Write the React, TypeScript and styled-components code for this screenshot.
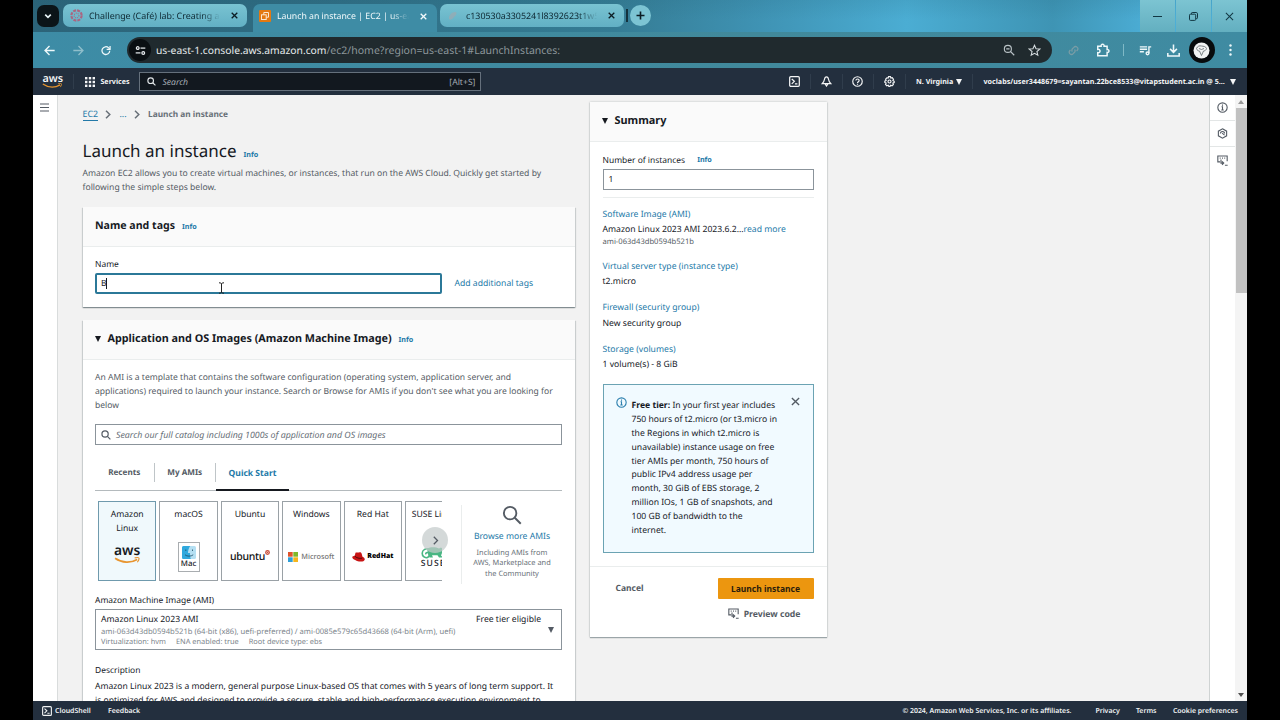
import React from "react";
import styled, { createGlobalStyle, css } from "styled-components";

const GlobalStyle = createGlobalStyle`
  * { box-sizing: border-box; }
  body {
    margin: 0;
    background: #000;
    font-family: "Noto Sans", sans-serif;
    text-rendering: geometricPrecision;
    color: #16191f;
    overflow: hidden;
  }
`;

const ink = "#16191f";
const grey = "#545b64";
const link = "#2379a8";
const line = "#eaeded";

/* ---------- frame ---------- */

const Screen = styled.div`
  width: 1280px;
  height: 720px;
  padding: 0 33px;
  background: #000;
  overflow: hidden;
`;

const Browser = styled.div`
  display: flex;
  flex-direction: column;
  width: 1214px;
  height: 720px;
  overflow: hidden;
`;

/* ---------- browser chrome ---------- */

const TabStrip = styled.div`
  display: flex;
  align-items: flex-start;
  flex: none;
  height: 32px;
  padding-left: 4px;
  background:
    linear-gradient(rgba(30, 90, 110, 0.12), rgba(30, 110, 140, 0) 60%),
    linear-gradient(90deg, #2c6479 0%, #2e6a80 18%, #357c94 48%, #3f93b4 60%, #4badd3 72%, #3e94b4 84%, #4caed6 92%);
`;

const TabMenu = styled.div`
  display: flex;
  align-items: center;
  justify-content: center;
  width: 22px;
  height: 22px;
  margin: 5px 4px 0 0;
  border-radius: 7px;
  background: #0b1418;
`;

const Tab = styled.div<{ $active?: boolean }>`
  display: flex;
  align-items: center;
  flex: none;
  width: 184px;
  padding: 0 9px 0 7px;
  font-size: 8.9px;
  ${(p) =>
    p.$active
      ? css`
          height: 28px;
          margin: 4px 3px 0 6px;
          padding: 0 10px 4px 6px;
          border-radius: 7px 7px 0 0;
          background: #3e8ca5;
          color: #f2fafc;
          font-size: 8.72px;
        `
      : css`
          height: 23px;
          margin-top: 4px;
          border-radius: 7px;
          background: linear-gradient(#79c3d2, #62b0c4);
          color: #0f2a34;
        `}
`;

const TabTitle = styled.span`
  flex: 1;
  margin: 0 8px 0 6px;
  white-space: nowrap;
  overflow: hidden;
  -webkit-mask-image: linear-gradient(90deg, #000 84%, transparent 98%);
  mask-image: linear-gradient(90deg, #000 84%, transparent 98%);
`;

const TabDivider = styled.div`
  width: 2px;
  height: 13px;
  margin: 9px 2px 0;
  background: #14323d;
`;

const NewTab = styled.div`
  display: flex;
  align-items: center;
  justify-content: center;
  width: 21px;
  height: 21px;
  margin-top: 5px;
  border-radius: 50%;
  background: #7cc4d3;
`;

const WindowButtons = styled.div`
  display: flex;
  gap: 1px;
  height: 32px;
  margin-left: auto;
`;

const WindowButton = styled.div`
  display: flex;
  align-items: center;
  justify-content: center;
  width: 35px;
  height: 32px;
  background: linear-gradient(#7cc4d2, #63afc0);
`;

const Toolbar = styled.div`
  display: flex;
  align-items: center;
  flex: none;
  height: 36px;
  padding: 0 11px;
  background: linear-gradient(90deg, #3d8ca6, #41899b 60%, #3f8ba2);
`;

const ToolSlot = styled.div<{ $w: number }>`
  display: flex;
  align-items: center;
  justify-content: center;
  flex: none;
  width: ${(p) => p.$w}px;
  height: 26px;
`;

const Omnibox = styled.div`
  display: flex;
  align-items: center;
  flex: none;
  width: 925px;
  height: 26px;
  margin: 0 8px 0 6px;
  padding: 0 6px 0 2px;
  border-radius: 13px;
  background: #202a2e;
  font-size: 10.3px;
  color: #e6eaec;
`;

const SiteBadge = styled.div`
  display: flex;
  align-items: center;
  justify-content: center;
  width: 22px;
  height: 22px;
  margin-right: 5px;
  border-radius: 50%;
  background: #0a0f12;
`;

const UrlHost = styled.span`
  padding-top: 1px;
`;

const UrlPath = styled.span`
  flex: 1;
  padding-top: 1px;
  font-size: 10.5px;
  color: #8d979b;
`;

const ToolDivider = styled.div`
  width: 1px;
  height: 12px;
  background: #7fb9c6;
`;

const Avatar = styled.div`
  display: flex;
  align-items: center;
  justify-content: center;
  width: 26px;
  height: 26px;
  border-radius: 50%;
  background: #080b0d;
`;

/* ---------- AWS navigation ---------- */

const Nav = styled.div`
  display: flex;
  align-items: center;
  flex: none;
  height: 27px;
  padding: 0 11px 0 10px;
  background: #232f3e;
  color: #f4f5f6;
  font-size: 7.15px;
  font-weight: 700;
`;

const AwsMark = styled.div<{ $size: number; $color: string }>`
  display: flex;
  flex-direction: column;
  align-items: center;
  width: ${(p) => p.$size * 1.8}px;
  font-size: ${(p) => p.$size}px;
  line-height: ${(p) => p.$size * 0.86}px;
  font-weight: 600;
  color: ${(p) => p.$color};
`;

const NavDivider = styled.div<{ $ml?: number; $mr?: number }>`
  flex: none;
  width: 1px;
  height: 15px;
  margin: 0 ${(p) => p.$mr ?? 0}px 0 ${(p) => p.$ml ?? 0}px;
  background: #303d4c;
`;

const Services = styled.div`
  display: flex;
  align-items: center;
  gap: 5px;
  width: 54px;
`;

const NavSearch = styled.div`
  display: flex;
  align-items: center;
  flex: none;
  width: 342px;
  height: 19px;
  padding: 0 5px 0 7px;
  border: 1px solid #65707c;
  background: #12181f;
  color: #a3abb3;
  font-size: 8.6px;
  font-weight: 400;

  i { flex: 1; margin-left: 6px; }
`;

const NavIcons = styled.div`
  display: flex;
  align-items: center;
  margin-left: auto;
`;

const NavSlot = styled.div`
  display: flex;
  align-items: center;
  justify-content: center;
  width: 30.7px;
`;

const NavMenu = styled.div<{ $w: number }>`
  display: flex;
  align-items: center;
  justify-content: space-between;
  width: ${(p) => p.$w}px;
  white-space: nowrap;
`;

/* ---------- page body ---------- */

const Body = styled.div`
  display: flex;
  flex: none;
  height: 606px;
  overflow: hidden;
  background: #f2f2f2;
`;

const LeftRail = styled.div`
  display: flex;
  justify-content: center;
  align-items: flex-start;
  flex: none;
  width: 25px;
  padding: 8px 2px 0 0;
  border-right: 1px solid #d9dcdc;
  background: #fff;
`;

const Main = styled.main`
  display: flex;
  align-items: flex-start;
  gap: 15px;
  flex: 1;
  min-width: 0;
  padding-left: 24.5px;
`;

const Column = styled.div`
  display: flex;
  flex-direction: column;
  flex: none;
  width: 492px;
  padding-top: 12px;
`;

const Crumbs = styled.div`
  display: flex;
  align-items: center;
  height: 15px;
  font-size: 8.3px;
  font-weight: 700;
  color: #687078;

  svg { margin: 0 8px 0 7.5px; }
`;

const CrumbLink = styled.span<{ $underlined?: boolean }>`
  line-height: 12px;
  font-size: 8.8px;
  font-weight: 400;
  color: ${link};
  border-bottom: 1px solid ${(p) => (p.$underlined ? link : "transparent")};
`;

const TitleRow = styled.div`
  display: flex;
  align-items: baseline;
  gap: 7px;
  height: 24px;
  margin-top: 17px;
`;

const PageTitle = styled.h1`
  margin: 0;
  font-size: 17px;
  line-height: 24px;
  font-weight: 400;
`;

const Info = styled.span`
  font-size: 7.2px;
  font-weight: 700;
  color: ${link};
`;

const Lines = styled.div<{ $mt?: number; $color?: string; $size?: number; $lh?: number }>`
  margin-top: ${(p) => p.$mt ?? 0}px;
  font-size: ${(p) => p.$size ?? 8.61}px;
  line-height: ${(p) => p.$lh ?? 14}px;
  white-space: pre;
  color: ${(p) => p.$color ?? grey};
`;

const Card = styled.section`
  margin-top: 13px;
  background: #fff;
  box-shadow: 0 1px 1px rgba(0, 28, 36, 0.3), 1px 1px 1px rgba(0, 28, 36, 0.12), -1px 1px 1px rgba(0, 28, 36, 0.12);
`;

const CardHeader = styled.div<{ $top?: number }>`
  display: flex;
  align-items: baseline;
  height: 40px;
  padding: ${(p) => p.$top ?? 9}px 13px 0 12.5px;
  border-bottom: 1px solid ${line};
  background: #fafafa;
`;

const CardTitle = styled.h2<{ $size?: number }>`
  margin: 0 7px 0 0;
  font-size: ${(p) => p.$size ?? 10.8}px;
  line-height: 20px;
  font-weight: 700;
`;

const Caret = styled.span<{ $gap?: number; $color?: string }>`
  width: 0;
  height: 0;
  margin-right: ${(p) => p.$gap ?? 0}px;
  border: 3.5px solid transparent;
  border-top: 6px solid ${(p) => p.$color ?? ink};
  border-bottom: 0;
`;

const CardBody = styled.div<{ $bottom?: number }>`
  padding: 10px 12.5px ${(p) => p.$bottom ?? 0}px;
`;

const Label = styled.div<{ $mt?: number }>`
  display: flex;
  align-items: center;
  gap: 12px;
  height: 14px;
  margin-top: ${(p) => p.$mt ?? 0}px;
  font-size: 8.45px;
`;

const LinkText = styled.span`
  font-size: 8.64px;
  color: ${link};
`;

const FieldRow = styled.div`
  display: flex;
  align-items: center;
  gap: 12.5px;
  margin-top: 2px;

  ${LinkText} { padding-bottom: 2px; }
`;

const Field = styled.div<{ $w: number; $focus?: boolean }>`
  display: flex;
  align-items: center;
  flex: none;
  width: ${(p) => p.$w}px;
  height: 21px;
  padding-left: 5px;
  border: 1px solid #8b949b;
  font-size: 8.5px;
  background: #fff;
  ${(p) =>
    p.$focus &&
    css`
      position: relative;
      padding-left: 4px;
      border: 2px solid #2b7898;
      border-radius: 2px;
    `}
`;

const TextCaret = styled.span`
  width: 1px;
  height: 11px;
  margin-left: -0.5px;
  background: ${ink};
`;

const MousePointer = styled.svg`
  position: absolute;
  left: 121px;
  top: 7px;
`;

const CatalogSearch = styled.div`
  display: flex;
  align-items: center;
  gap: 5px;
  width: 467px;
  height: 21px;
  margin-top: 12px;
  padding-left: 5px;
  border: 1px solid #8b949b;
  font-size: 8.8px;
  font-style: italic;
  color: #687078;
`;

const Tabs = styled.div`
  display: flex;
  width: 467px;
  height: 36px;
  margin-top: 10px;
  border-bottom: 1px solid #b4babd;
  font-size: 8.15px;
  font-weight: 700;
  color: ${grey};
`;

const TabItem = styled.div<{ $w: number; $active?: boolean }>`
  display: flex;
  justify-content: center;
  width: ${(p) => p.$w}px;
  height: ${(p) => (p.$active ? 36 : 19)}px;
  margin-top: ${(p) => (p.$active ? 0 : 8)}px;
  padding-top: ${(p) => (p.$active ? 11 : 3)}px;
  line-height: 14px;
  ${(p) =>
    p.$active
      ? css`
          border-bottom: 2px solid ${ink};
          color: ${link};
          font-size: 8.55px;
        `
      : css`
          border-right: 1px solid #bfc5c8;
        `}
`;

const Picker = styled.div`
  position: relative;
  display: flex;
  margin-top: 10px;
  height: 83px;
`;

const Tiles = styled.div`
  display: flex;
  gap: 3px;
  width: 344px;
  margin-left: 3px;
  overflow: hidden;
`;

const Tile = styled.div<{ $selected?: boolean }>`
  display: flex;
  flex-direction: column;
  align-items: center;
  flex: none;
  width: 58.4px;
  height: 80px;
  padding-top: 4.5px;
  border: 1px solid ${(p) => (p.$selected ? "#6f9aad" : "#9aa1a6")};
  background: ${(p) => (p.$selected ? "#f0f9fc" : "#fff")};
  font-size: 8.62px;
  line-height: 14px;
  text-align: center;
  white-space: pre;
`;

const TileArt = styled.div<{ $lift?: number }>`
  display: flex;
  align-items: center;
  justify-content: center;
  flex: none;
  height: 34px;
  margin-top: auto;
  margin-bottom: ${(p) => 6.5 + (p.$lift ?? 0)}px;
`;

const MacBadge = styled.div`
  display: flex;
  flex-direction: column;
  align-items: center;
  width: 22px;
  height: 30px;
  padding-top: 3px;
  border: 1px solid #a9adb0;
  font-size: 7.8px;
  line-height: 11px;
  font-weight: 500;
`;

const UbuntuWord = styled.div`
  display: flex;
  align-items: flex-start;
  font-size: 10.5px;
  font-weight: 500;
  letter-spacing: -0.35px;
  color: #111;
`;

const MicrosoftWord = styled.div`
  display: flex;
  align-items: center;
  gap: 3px;
  font-size: 7.3px;
  font-weight: 500;
  color: #737373;
`;

const RedHatWord = styled.div`
  display: flex;
  align-items: center;
  gap: 2px;
  font-size: 6.9px;
  font-weight: 900;
  color: #000;
  letter-spacing: -0.1px;
  word-spacing: -1.3px;
`;

const SuseWord = styled.div`
  display: flex;
  flex-direction: column;
  align-items: flex-start;
  width: 27px;
  font-size: 8.6px;
  line-height: 9px;
  letter-spacing: 1.1px;
  font-weight: 500;
`;

const ScrollArrow = styled.div`
  position: absolute;
  left: 327px;
  top: 26px;
  display: flex;
  align-items: center;
  justify-content: center;
  width: 26px;
  height: 26px;
  border-radius: 50%;
  background: rgba(196, 202, 203, 0.72);
`;

const Browse = styled.div`
  display: flex;
  flex-direction: column;
  align-items: center;
  width: 101px;
  height: 79px;
  margin: 4px 0 0 19px;
  border-left: 1px solid ${line};
  font-size: 7.4px;
  line-height: 10.3px;
  text-align: center;
  color: #687078;
  white-space: pre;

  ${LinkText} { margin: 4px 0 5px; line-height: 14px; }
`;

const Select = styled.div`
  display: flex;
  align-items: center;
  width: 467px;
  height: 41px;
  margin-top: 2px;
  padding: 0 7px 0 5px;
  border: 1px solid #8b949b;
`;

const SelectText = styled.div`
  display: flex;
  flex-direction: column;
  flex: 1;
  font-size: 7.4px;
  line-height: 10px;
  color: #7b848b;
`;

const SelectTop = styled.div`
  display: flex;
  justify-content: space-between;
  padding-right: 7px;
  font-size: 8.62px;
  line-height: 15px;
  color: ${ink};
`;

const Meta = styled.div`
  display: flex;
  gap: 10px;
`;

/* ---------- summary ---------- */

const Summary = styled.aside`
  flex: none;
  width: 237px;
  height: 535px;
  margin-top: 7px;
  background: #fff;
  box-shadow: 0 1px 1px rgba(0, 28, 36, 0.3), 0 0 2px rgba(0, 28, 36, 0.25);
`;

const SummaryBody = styled.div`
  padding: 11px 13px 0;
`;

const Rule = styled.div<{ $mt: number }>`
  height: 1px;
  margin-top: ${(p) => p.$mt}px;
  background: ${line};
`;

const Fact = styled.div<{ $mt: number }>`
  display: flex;
  flex-direction: column;
  margin-top: ${(p) => p.$mt}px;
  font-size: 8.64px;
  line-height: 15.3px;

  small { font-size: 7.62px; line-height: 9px; color: ${grey}; }
`;

const Alert = styled.div`
  display: flex;
  width: 211px;
  height: 169px;
  margin-top: 11px;
  padding: 12px 13px 0 12px;
  border: 1px solid #6ba3b3;
  background: #f1faff;
  font-size: 8.62px;
  line-height: 13.94px;
  white-space: pre;

  p { flex: 1; margin: 2px 0 0 5px; }
`;

const Actions = styled.div`
  display: flex;
  align-items: center;
  justify-content: space-between;
  padding: 11px 13px 0 26px;
  font-size: 8.5px;
  font-weight: 700;
  color: ${grey};
`;

const Primary = styled.button`
  width: 96px;
  height: 21px;
  padding: 0;
  border: 0;
  border-radius: 1px;
  background: #ec960f;
  color: #2b1d0c;
  font: 700 8.49px "Noto Sans", sans-serif;
`;

const Preview = styled.div`
  display: flex;
  align-items: center;
  justify-content: flex-end;
  gap: 5px;
  height: 14px;
  margin-top: 8px;
  padding-right: 26px;
  font-size: 8.69px;
  font-weight: 700;
  color: ${grey};
`;

/* ---------- right edge and footer ---------- */

const RightRail = styled.div`
  flex: none;
  width: 26px;
  border-left: 1px solid #cfd3d3;
  background: #fff;
`;

const RailItem = styled.div`
  display: flex;
  align-items: center;
  justify-content: center;
  height: 26px;
  padding-right: 1px;
  border-bottom: 1px solid #e3e6e6;
  &:last-child { border-bottom: 0; }
`;

const Scrollbar = styled.div`
  display: flex;
  flex-direction: column;
  align-items: center;
  justify-content: space-between;
  flex: none;
  width: 12px;
  padding: 5px 0 4px;
  background: #f4f4f4;
`;

const Thumb = styled.div`
  width: 11px;
  height: 185px;
  margin: 4px 0 auto;
  background: #c1c1c1;
`;

const Footer = styled.footer`
  display: flex;
  align-items: center;
  flex: none;
  height: 19px;
  padding: 1px 9px 0;
  background: #232f3e;
  color: #f0f2f3;
  font-size: 6.95px;
  font-weight: 600;
`;

const FooterItem = styled.span<{ $w?: number }>`
  display: flex;
  align-items: center;
  gap: 3px;
  width: ${(p) => (p.$w ? `${p.$w}px` : "auto")};
  white-space: nowrap;
`;

const FooterEnd = styled.div`
  display: flex;
  margin-left: auto;
`;

/* ---------- icons ---------- */

type IconProps = { s?: number; c?: string; w?: number; box?: number; children?: React.ReactNode };
const Icon = ({ s = 12, c = "currentColor", w = 1.4, box = 16, children }: IconProps) => (
  <svg width={s} height={s} viewBox={`0 0 ${box} ${box}`} fill="none" stroke={c} strokeWidth={w}>
    {children}
  </svg>
);

const Magnifier = ({ s, c, w }: IconProps) => (
  <Icon s={s} c={c} w={w}>
    <circle cx="6.5" cy="6.5" r="5" />
    <path d="M10.2 10.2 15 15" />
  </Icon>
);

const CrumbArrow = () => (
  <svg width="6" height="9" viewBox="0 0 6 9" fill="none" stroke="#687078" strokeWidth="1.5">
    <path d="M1 .8 4.8 4.5 1 8.2" />
  </svg>
);

const Close = ({ s = 7, c = "#0f2a34", w = 1.5 }: IconProps) => (
  <Icon s={s} c={c} w={w} box={8}>
    <path d="m.8.8 6.4 6.4M7.2.8.8 7.2" />
  </Icon>
);

const InfoIcon = ({ s = 11, c = grey }: IconProps) => (
  <Icon s={s} c={c} w={1.6}>
    <circle cx="8" cy="8" r="6.8" />
    <path d="M8 11.7V7H6.6M8 3.8v1.6M6.2 11.6h3.6" />
  </Icon>
);

const PreviewIcon = ({ s = 11 }: IconProps) => (
  <Icon s={s} c={grey} w={1.6}>
    <path d="M4.500 10H1.200V1.500h13.600V9" />
    <path d="M4 4.500h1.300M7.300 4.500h1.300M10.600 4.500h1.300" />
    <path d="M5.800 6.500v5.300h3.700M7.300 9.300l2.500 2.500-2.500 2.500M11.500 14.800h4" />
  </Icon>
);

const TerminalIcon = ({ s = 11 }: IconProps) => (
  <Icon s={s} w={1.8}>
    <rect x="1" y="1" width="14" height="14" rx="1.6" />
    <path d="m4 4.3 3.8 3.5L4 11.5M8.6 11.5h3.6" />
  </Icon>
);

const AwsLogo = ({ size, color }: { size: number; color: string }) => (
  <AwsMark $size={size} $color={color}>
    aws
    <svg width={size * 1.9} height={size * 0.51} viewBox="0 0 26 7" fill="none" stroke="#e8952f" strokeWidth="1.7">
      <path d="M1 1.2c7 4.8 15.5 5 22 1.2" />
      <path d="M20.5.9c2-.4 3.8-.4 4.2.1.4.7-.3 2.6-1.5 4.2" strokeWidth="1.1" />
    </svg>
  </AwsMark>
);

const MacFace = () => (
  <svg width="14" height="13" viewBox="0 0 14 13">
    <rect width="14" height="13" rx="1.5" fill="#b4dff2" />
    <path d="M1.500 0h6.700C6.500 2.500 6 5 6 7h2c0 2.500.2 4.500.8 6H1.500A1.500 1.500 0 0 1 0 11.500v-10A1.500 1.500 0 0 1 1.500 0z" fill="#2fa9de" />
    <path d="M3.800 3.500V5M10.500 3.500V5M3 8.800c2 1.800 6 1.800 8.200 0" stroke="#1c4a63" strokeWidth=".8" fill="none" />
  </svg>
);

const WindowsFlag = () => (
  <svg width="10" height="10" viewBox="0 0 10 10">
    <path fill="#e0532c" d="M0 0h4.700v4.700H0z" />
    <path fill="#7fb82a" d="M5.300 0H10v4.700H5.300z" />
    <path fill="#2f9fd8" d="M0 5.300h4.700V10H0z" />
    <path fill="#f5b61d" d="M5.300 5.300H10V10H5.300z" />
  </svg>
);

const RedHatHat = () => (
  <svg width="13" height="10" viewBox="0 0 13 10">
    <path d="M3.500.8C4.500-.2 6 1 7 .4c1.200-.4 2.200 0 2.600 1.200l.9 3.200c1.500.6 2.500 1.800 2.200 3C12 10 8 10 5 8.900 2 7.900 0 6.300.3 5 .5 4.200 1.500 4 2.700 4z" fill="#c81414" />
    <path d="M2.700 4c1.500 1.900 5 2.900 7.500 2.200" stroke="#3a0808" strokeWidth=".8" fill="none" />
  </svg>
);

const Chameleon = () => (
  <svg width="27" height="12" viewBox="0 0 27 12" fill="none" stroke="#49b683">
    <path d="M6 1.600C10-.4 15 0 18 1.500l2-1 2 1.600c2.500.3 4 1.200 4.500 2.600-1 1.500-3.500 1.500-5.500 1.400l-1 2.500 2 2h-4l-1.500-2.300H11l1 2.300H8.500L7 7z" fill="#49b683" stroke="none" />
    <path d="M9 2.500C5 .4 1.200 3 1.200 6.300c0 2.900 2.300 4.800 4.800 4.300 2.400-.5 3.200-3.400 1.400-4.700-1.300-.9-3 .1-2.600 1.500" strokeWidth="1.600" />
  </svg>
);

/* ---------- page ---------- */

export default function App() {
  return (
    <Screen>
      <GlobalStyle />
      <Browser>
        <TabStrip>
          <TabMenu>
            <Icon s={8} c="#e8f4f7" w={1.6} box={8}><path d="m1.2 2.600 2.800 2.800 2.800-2.800" /></Icon>
          </TabMenu>
          <Tab>
            <Icon s={13} c="#ab6480" w={2.6}>
              <circle cx="8" cy="8" r="6.300" strokeDasharray="3.600 1.350" />
              <circle cx="8" cy="8" r="2.900" strokeWidth="1.400" strokeDasharray="1.200 1.080" />
            </Icon>
            <TabTitle>Challenge (Café) lab: Creating a</TabTitle>
            <Close c="#0c1d24" />
          </Tab>
          <Tab $active>
            <svg width="12" height="12" viewBox="0 0 12 12" fill="none" stroke="#fbe6d0" strokeWidth="1">
              <rect width="12" height="12" rx="1" fill="#e47911" stroke="none" />
              <rect x="2.500" y="4.800" width="4.700" height="4.700" />
              <path d="M4.800 4.800V2.500h4.700v4.700H7.200" />
            </svg>
            <TabTitle>Launch an instance | EC2 | us-ea</TabTitle>
            <Close c="#f2fafc" />
          </Tab>
          <Tab>
            <svg width="13" height="12" viewBox="0 0 13 12">
              <path d="M2 8c0-3 3-6 6-6 2 0 2 2 0 4S4 11 2 9z" fill="#9aa9b1" opacity=".75" />
            </svg>
            <TabTitle>c130530a3305241l8392623t1w5</TabTitle>
            <Close c="#0c1d24" />
          </Tab>
          <TabDivider />
          <NewTab>
            <Icon s={9} c="#0c1d24" w={1.6} box={9}><path d="M4.500.5v8M.5 4.500h8" /></Icon>
          </NewTab>
          <WindowButtons>
            <WindowButton><Icon s={9} c="#123743" w={1} box={9}><path d="M0 4.500h9" /></Icon></WindowButton>
            <WindowButton>
              <Icon s={9} c="#123743" w={1} box={9}>
                <rect x=".5" y="2.200" width="6.200" height="6.200" rx="1" />
                <path d="M2.500 2V1.200c0-.4.3-.7.7-.7h4c.8 0 1.300.5 1.300 1.300v4c0 .5-.3.8-.8.8H7" />
              </Icon>
            </WindowButton>
            <WindowButton><Close s={9} c="#123743" w={0.9} /></WindowButton>
          </WindowButtons>
        </TabStrip>

        <Toolbar>
          <ToolSlot $w={11}><Icon s={11} c="#eef8fa" w={2}><path d="M15.500 8h-14M8 1.500 1.500 8 8 14.500" /></Icon></ToolSlot>
          <ToolSlot $w={46}><Icon s={11} c="#8fbecb" w={1.9}><path d="M.5 8h14M8 1.500 14.500 8 8 14.500" /></Icon></ToolSlot>
          <ToolSlot $w={10}>
            <Icon s={11} c="#eef8fa" w={2}>
              <path d="M14 8.500A6.200 6.200 0 1 1 12.200 3.800l2 2" />
              <path d="M14.500.8v5.400H9" />
            </Icon>
          </ToolSlot>
          <ToolSlot $w={10} />
          <Omnibox>
            <SiteBadge>
              <Icon s={11} c="#e8ecee" w={1.8}>
                <circle cx="4" cy="4.500" r="2" /><path d="M8 4.500h7" />
                <circle cx="12" cy="11.500" r="2" /><path d="M1 11.500h7" />
              </Icon>
            </SiteBadge>
            <UrlHost>us-east-1.console.aws.amazon.com</UrlHost>
            <UrlPath>/ec2/home?region=us-east-1#LaunchInstances:</UrlPath>
            <ToolSlot $w={26}>
              <Icon s={12} c="#b9c2c6" w={1.5}>
                <circle cx="6.500" cy="6.500" r="4.700" /><path d="m10 10 5 5M4.300 6.500h4.400" />
              </Icon>
            </ToolSlot>
            <ToolSlot $w={24}>
              <Icon s={13} c="#d5dcdf" w={1.3}>
                <path d="m8 1.500 1.900 4.300 4.700.4-3.600 3.100 1.100 4.600L8 11.500l-4.100 2.400L5 9.300 1.400 6.200l4.700-.4z" />
              </Icon>
            </ToolSlot>
          </Omnibox>
          <ToolSlot $w={27}>
            <Icon s={11} c="#7a9da6" w={1.8}>
              <path d="M6.500 9.500a3 3 0 0 1 0-4l2-2a3 3 0 0 1 5 4.200l-1 1M9.500 6.500a3 3 0 0 1 0 4l-2 2a3 3 0 0 1-5-4.200l1-1" />
            </Icon>
          </ToolSlot>
          <ToolSlot $w={31}>
            <Icon s={14} c="#eef8fa" w={1.7}>
              <path d="M2 3.700h3.800a1.800 1.800 0 1 1 3.500 0h3.400v3.800a1.700 1.700 0 1 1 0 3.300v3.700H2v-3.400a2 2 0 1 0 0-3.800z" />
            </Icon>
          </ToolSlot>
          <ToolSlot $w={10}><ToolDivider /></ToolSlot>
          <ToolSlot $w={34}>
            <Icon s={13} c="#eef8fa" w={1.7}>
              <path d="M1 3.500h9M1 6.500h9M1 9.500h5" /><circle cx="10.500" cy="11.500" r="1.700" /><path d="M12.200 11.500v-8H15" />
            </Icon>
          </ToolSlot>
          <ToolSlot $w={23}>
            <Icon s={13} c="#eef8fa" w={1.9}><path d="M8 .5V10M3.800 6 8 10.200 12.200 6M1 11v3.800h14V11" /></Icon>
          </ToolSlot>
          <ToolSlot $w={33}>
            <Avatar>
              <svg width="17" height="17" viewBox="0 0 17 17" fill="none" stroke="#60676b" strokeWidth=".8">
                <circle cx="8.500" cy="8.500" r="8" fill="#f2f3f3" stroke="none" />
                <path d="M3.500 6.500c1-2.500 3-3 5-2.500s4 0 5 2.500c-.5 2-2 2.500-3 2.500M3.500 6.500c.5 2 2 2.500 3 2.500l2 4.500 2-4.500M6 6.500l2.500 1 2.500-1" />
              </svg>
            </Avatar>
          </ToolSlot>
          <ToolSlot $w={24}>
            <svg width="3" height="12" viewBox="0 0 3 12" fill="#eef8fa">
              <circle cx="1.500" cy="1.500" r="1.200" /><circle cx="1.500" cy="6" r="1.200" /><circle cx="1.500" cy="10.500" r="1.200" />
            </svg>
          </ToolSlot>
        </Toolbar>

        <Nav>
          <AwsLogo size={10.8} color="#f4f5f6" />
          <NavDivider $ml={11} $mr={11} />
          <Services>
            <svg width="10" height="10" viewBox="0 0 10 10" fill="#f4f5f6">
              {[0, 3.8, 7.6].map((y) => [0, 3.8, 7.6].map((x) => <rect key={`${x}-${y}`} x={x} y={y} width="2.400" height="2.400" />))}
            </svg>
            Services
          </Services>
          <NavSearch>
            <Magnifier s={9} c="#e4e8eb" w={2} />
            <i>Search</i>
            [Alt+S]
          </NavSearch>
          <NavIcons>
            <NavSlot><TerminalIcon s={11} /></NavSlot>
            <NavDivider />
            <NavSlot>
              <Icon s={11} w={1.8}><path d="M8 1.200c1.600 0 2.600 1.400 2.900 3.500.4 2.700 1.600 4.300 3.300 6.300H1.800c1.700-2 2.900-3.600 3.300-6.300C5.400 2.600 6.400 1.200 8 1.200zM6 11.500l2 3 2-3" /></Icon>
            </NavSlot>
            <NavDivider />
            <NavSlot>
              <Icon s={11} w={1.7}>
                <circle cx="8" cy="8" r="6.900" />
                <path d="M5.700 6.600c0-3.100 4.700-2.900 4.700-.1C10.400 8.300 8 8.200 8 10M8 11.200v1.600" />
              </Icon>
            </NavSlot>
            <NavDivider />
            <NavSlot>
              <Icon s={11} w={1.7}>
                <path d="M6.600 1h2.800l.6 2 2-.5 1.800 2.400-.9 1.800 1.900 1v1.800l-1.900.9.7 2-2 1.900-2-.8-.8 1.500H7l-.9-1.500-2 .7-1.900-1.900.9-2-1.900-.9V7.500l1.900-1-.7-1.900 1.800-2 1.800.5z" />
                <circle cx="8" cy="8" r="2.200" />
              </Icon>
            </NavSlot>
            <NavDivider $mr={10} />
            <NavMenu $w={45.5}>N. Virginia <Caret $color="#f4f5f6" /></NavMenu>
            <NavDivider $ml={10} $mr={11} />
            <NavMenu $w={252.5}>voclabs/user3448679=sayantan.22bce8533@vitapstudent.ac.in @ 5... <Caret $color="#f4f5f6" /></NavMenu>
          </NavIcons>
        </Nav>

        <Body>
          <LeftRail>
            <Icon s={9} c={grey} w={1.2} box={9}><path d="M0 1h9M0 4.500h9M0 8h9" /></Icon>
          </LeftRail>

          <Main>
            <Column>
              <Crumbs>
                <CrumbLink $underlined>EC2</CrumbLink>
                <CrumbArrow />
                <CrumbLink>...</CrumbLink>
                <CrumbArrow />
                Launch an instance
              </Crumbs>
              <TitleRow>
                <PageTitle>Launch an instance</PageTitle>
                <Info>Info</Info>
              </TitleRow>
              <Lines $mt={3}>{"Amazon EC2 allows you to create virtual machines, or instances, that run on the AWS Cloud. Quickly get started by\nfollowing the simple steps below."}</Lines>

              <Card>
                <CardHeader>
                  <CardTitle $size={10.6}>Name and tags</CardTitle>
                  <Info>Info</Info>
                </CardHeader>
                <CardBody $bottom={13}>
                  <Label>Name</Label>
                  <FieldRow>
                    <Field $w={347} $focus>
                      B<TextCaret />
                      <MousePointer width="7" height="12" viewBox="0 0 7 12" fill="none" stroke="#222" strokeWidth="1">
                        <path d="M1 .8c1.500 0 2.500.4 2.500 1.200C3.500 1.200 4.500.8 6 .8M3.500 2v8M1 11.200c1.500 0 2.500-.4 2.500-1.200 0 .8 1 1.200 2.500 1.200" />
                      </MousePointer>
                    </Field>
                    <LinkText>Add additional tags</LinkText>
                  </FieldRow>
                </CardBody>
              </Card>

              <Card>
                <CardHeader $top={8.5}>
                  <Caret $gap={6.5} />
                  <CardTitle>Application and OS Images (Amazon Machine Image)</CardTitle>
                  <Info>Info</Info>
                </CardHeader>
                <CardBody>
                  <Lines $size={8.56}>{"An AMI is a template that contains the software configuration (operating system, application server, and\napplications) required to launch your instance. Search or Browse for AMIs if you don't see what you are looking for\nbelow"}</Lines>
                  <CatalogSearch>
                    <Magnifier s={10} c={grey} w={1.9} />
                    Search our full catalog including 1000s of application and OS images
                  </CatalogSearch>
                  <Tabs>
                    <TabItem $w={59.5}>Recents</TabItem>
                    <TabItem $w={61.5}>My AMIs</TabItem>
                    <TabItem $w={73} $active>Quick Start</TabItem>
                  </Tabs>
                  <Picker>
                    <Tiles>
                      <Tile $selected>
                        {"Amazon\nLinux"}
                        <TileArt $lift={2}><AwsLogo size={13.8} color="#16191f" /></TileArt>
                      </Tile>
                      <Tile>
                        macOS
                        <TileArt><MacBadge><MacFace />Mac</MacBadge></TileArt>
                      </Tile>
                      <Tile>
                        Ubuntu
                        <TileArt>
                          <UbuntuWord>
                            ubuntu
                            <svg width="5" height="5" viewBox="0 0 5 5">
                              <circle cx="2.500" cy="2.500" r="2.400" fill="#c9503c" />
                              <circle cx="2.500" cy="2.500" r="1" fill="none" stroke="#fff" strokeWidth=".5" />
                            </svg>
                          </UbuntuWord>
                        </TileArt>
                      </Tile>
                      <Tile>
                        Windows
                        <TileArt><MicrosoftWord><WindowsFlag />Microsoft</MicrosoftWord></TileArt>
                      </Tile>
                      <Tile>
                        Red Hat
                        <TileArt><RedHatWord><RedHatHat />Red Hat</RedHatWord></TileArt>
                      </Tile>
                      <Tile>
                        SUSE Linux
                        <TileArt $lift={-1}>
                          <SuseWord><Chameleon /><span>SUSE</span></SuseWord>
                        </TileArt>
                      </Tile>
                    </Tiles>
                    <ScrollArrow>
                      <Icon s={9} c={grey} w={1.3} box={9}><path d="m2.800.8 3.700 3.700-3.700 3.700" /></Icon>
                    </ScrollArrow>
                    <Browse>
                      <Magnifier s={20} c={grey} w={1.5} />
                      <LinkText>Browse more AMIs</LinkText>
                      {"Including AMIs from\nAWS, Marketplace and\nthe Community"}
                    </Browse>
                  </Picker>
                  <Label $mt={9}>Amazon Machine Image (AMI)</Label>
                  <Select>
                    <SelectText>
                      <SelectTop><span>Amazon Linux 2023 AMI</span><span>Free tier eligible</span></SelectTop>
                      <Lines $size={7.61} $color="#7b848b" $lh={10}>ami-063d43db0594b521b (64-bit (x86), uefi-preferred) / ami-0085e579c65d43668 (64-bit (Arm), uefi)</Lines>
                      <Meta><span>Virtualization: hvm</span><span>ENA enabled: true</span><span>Root device type: ebs</span></Meta>
                    </SelectText>
                    <Caret $color={grey} />
                  </Select>
                  <Label $mt={13}>Description</Label>
                  <Lines $mt={2} $color={ink} $size={8.57}>{"Amazon Linux 2023 is a modern, general purpose Linux-based OS that comes with 5 years of long term support. It\nis optimized for AWS and designed to provide a secure, stable and high-performance execution environment to"}</Lines>
                </CardBody>
              </Card>
            </Column>

            <Summary>
              <CardHeader>
                <Caret $gap={6.5} />
                <CardTitle $size={10.9}>Summary</CardTitle>
              </CardHeader>
              <SummaryBody>
                <Label>Number of instances <Info>Info</Info></Label>
                <FieldRow><Field $w={211}>1</Field></FieldRow>
                <Rule $mt={7} />
                <Fact $mt={9}>
                  <LinkText>Software Image (AMI)</LinkText>
                  <span>Amazon Linux 2023 AMI 2023.6.2...<LinkText>read more</LinkText></span>
                  <small>ami-063d43db0594b521b</small>
                </Fact>
                <Fact $mt={12}><LinkText>Virtual server type (instance type)</LinkText>t2.micro</Fact>
                <Fact $mt={11.2}><LinkText>Firewall (security group)</LinkText>New security group</Fact>
                <Fact $mt={11.2}><LinkText>Storage (volumes)</LinkText>1 volume(s) - 8 GiB</Fact>
                <Alert>
                  <InfoIcon s={11} c="#2b7fae" />
                  <p>
                    <b>Free tier:</b>
                    {" In your first year includes\n750 hours of t2.micro (or t3.micro in\nthe Regions in which t2.micro is\nunavailable) instance usage on free\ntier AMIs per month, 750 hours of\npublic IPv4 address usage per\nmonth, 30 GiB of EBS storage, 2\nmillion IOs, 1 GB of snapshots, and\n100 GB of bandwidth to the\ninternet."}
                  </p>
                  <Close s={9} c={grey} w={1.2} />
                </Alert>
              </SummaryBody>
              <Rule $mt={13} />
              <Actions>
                Cancel
                <Primary>Launch instance</Primary>
              </Actions>
              <Preview><PreviewIcon s={11} /> Preview code</Preview>
            </Summary>
          </Main>

          <RightRail>
            <RailItem><InfoIcon s={11} /></RailItem>
            <RailItem>
              <Icon s={11} c={grey} w={1.6}>
                <path d="M8 1.200 14 4.600v6.800l-6 3.400-6-3.400V4.600zM5 8a3 3 0 0 1 6 0M7.500 7.500 11 10.300" />
              </Icon>
            </RailItem>
            <RailItem><PreviewIcon s={11} /></RailItem>
          </RightRail>
          <Scrollbar>
            <svg width="6" height="4" viewBox="0 0 6 4" fill="#9a9a9a"><path d="M3 0 6 4H0z" /></svg>
            <Thumb />
            <svg width="6" height="4" viewBox="0 0 6 4" fill="#505050"><path d="M0 0h6L3 4z" /></svg>
          </Scrollbar>
        </Body>

        <Footer>
          <FooterItem $w={66}><TerminalIcon s={10} />CloudShell</FooterItem>
          <FooterItem>Feedback</FooterItem>
          <FooterEnd>
            <FooterItem $w={193}>© 2024, Amazon Web Services, Inc. or its affiliates.</FooterItem>
            <FooterItem $w={40.5}>Privacy</FooterItem>
            <FooterItem $w={37}>Terms</FooterItem>
            <FooterItem>Cookie preferences</FooterItem>
          </FooterEnd>
        </Footer>
      </Browser>
    </Screen>
  );
}
